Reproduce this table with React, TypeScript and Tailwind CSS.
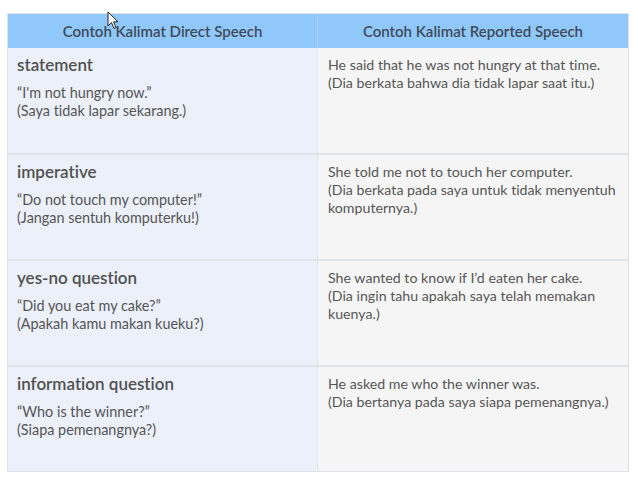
const ROWS = [
  {
    kind: "statement",
    direct: "“I'm not hungry now.”",
    directId: "(Saya tidak lapar sekarang.)",
    reported: "He said that he was not hungry at that time.",
    reportedId: "(Dia berkata bahwa dia tidak lapar saat itu.)",
  },
  {
    kind: "imperative",
    direct: "“Do not touch my computer!”",
    directId: "(Jangan sentuh komputerku!)",
    reported: "She told me not to touch her computer.",
    reportedId: "(Dia berkata pada saya untuk tidak menyentuh komputernya.)",
  },
  {
    kind: "yes-no question",
    direct: "“Did you eat my cake?”",
    directId: "(Apakah kamu makan kueku?)",
    reported: "She wanted to know if I’d eaten her cake.",
    reportedId: "(Dia ingin tahu apakah saya telah memakan kuenya.)",
  },
  {
    kind: "information question",
    direct: "“Who is the winner?”",
    directId: "(Siapa pemenangnya?)",
    reported: "He asked me who the winner was.",
    reportedId: "(Dia bertanya pada saya siapa pemenangnya.)",
  },
];

function Cursor() {
  return (
    <svg className="absolute left-[107px] top-[11px]" width="12" height="19" viewBox="0 0 12 19">
      <path d="M1 1 L1 15 L4.5 11.5 L7 17.5 L9 16.6 L6.6 10.8 L11 10.8 Z" fill="#fff" stroke="#222" strokeWidth="1" strokeLinejoin="round" />
    </svg>
  );
}

export default function App() {
  return (
    <div
      className="relative h-[478px] w-[638px] bg-white pt-[13px] pl-[7px] [font-variant-ligatures:none]"
      style={{ fontFamily: "Lato, 'Open Sans', sans-serif" }}
    >
      <div className="w-[622px] border border-[#dfe3e8]">
        <div className="grid grid-cols-[310px_310px] bg-[#91c8fb] text-[15px] font-semibold text-[#3e4a58]">
          <div className="flex h-[34px] items-center justify-center border-r border-[#a9d2f7]">Contoh Kalimat Direct Speech</div>
          <div className="flex h-[34px] items-center justify-center">Contoh Kalimat Reported Speech</div>
        </div>
        {ROWS.map((r, i) => (
          <div
            key={r.kind}
            className={`grid grid-cols-[310px_310px] ${i > 0 ? "h-[106px] border-t-2 border-[#e1e5ea]" : "h-[105px]"}`}
          >
            <div className="border-r border-[#dfe3ea] bg-[#ebf0fa] pl-[9px] pt-[6px] text-[#555]">
              <div className="text-[17px] font-semibold leading-[22px] text-[#505050]">{r.kind}</div>
              <div className="mt-[8px] text-[14.4px] leading-[18px]">
                <div>{r.direct}</div>
                <div>{r.directId}</div>
              </div>
            </div>
            <div className="bg-[#f5f5f5] pl-[10px] pr-[6px] pt-[8px] text-[14.2px] leading-[18px] text-[#555]">
              <div>{r.reported}</div>
              <div>{r.reportedId}</div>
            </div>
          </div>
        ))}
      </div>
      <Cursor />
    </div>
  );
}
